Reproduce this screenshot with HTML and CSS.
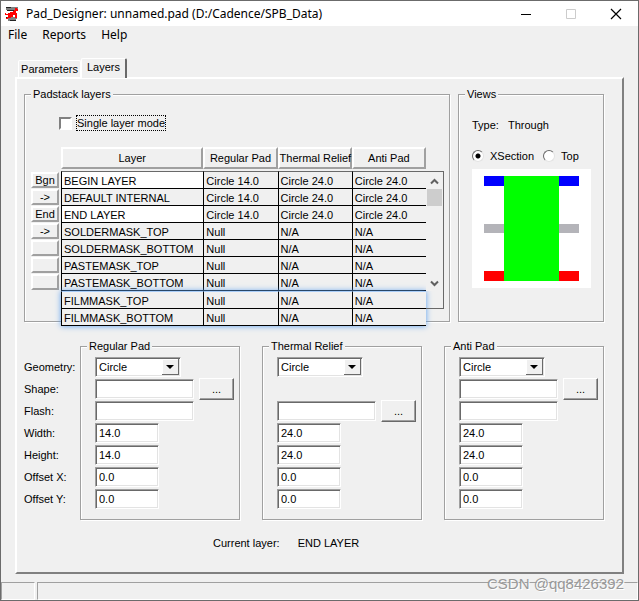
FILE: index.html
```html
<!DOCTYPE html>
<html lang="en">
<head>
  <meta charset="utf-8">
  <title>Pad_Designer: unnamed.pad</title>
  <link rel="stylesheet" href="styles.css">
</head>
<body>

<div class="window">
  <header class="titlebar">
    <svg class="app-icon" width="16" height="16" viewBox="0 0 16 16" shape-rendering="crispEdges">
      <path fill="#808080" d="M3 1h11v2H3zM2 2h9v2H2zM3 11h10v2H3zM4 13h8v2H4z"/>
      <path fill="#222" d="M2 1h5v1H2zM3 4h7v1H3zM2 11h2v1H2zM6 14h6v1H6z"/>
      <path fill="#f00" d="M11 2h2v1h1v2h-2v2h1v5h-2V9H9v2H7v1H4v1H2v-1h1v-1h1V9H1V7h1v1h2V7h2V6h3V5h1V4h1z"/>
    </svg>
    <span class="title">Pad_Designer: unnamed.pad (D:/Cadence/SPB_Data)</span>
    <button class="win-btn" aria-label="Minimize">
      <svg width="12" height="12" viewBox="0 0 12 12"><path d="M1 6.500h10" stroke="#000"/></svg>
    </button>
    <button class="win-btn" aria-label="Maximize" disabled>
      <svg width="12" height="12" viewBox="0 0 12 12"><path d="M1.500 1.500h9v9h-9z" fill="none" stroke="#ccc"/></svg>
    </button>
    <button class="win-btn" aria-label="Close">
      <svg width="12" height="12" viewBox="0 0 12 12"><path d="M1 1l10 10M11 1L1 11" stroke="#000" stroke-width="1.200"/></svg>
    </button>
  </header>

  <nav class="menubar">
    <button>File</button>
    <button>Reports</button>
    <button>Help</button>
  </nav>

  <div class="tabs" role="tablist">
    <button class="tab" role="tab">Parameters</button>
    <button class="tab active" role="tab" aria-selected="true">Layers</button>
  </div>

  <main class="panel">
    <div class="upper">
      <fieldset class="group">
        <legend>Padstack layers</legend>
        <div class="single-mode">
          <input type="checkbox" id="single">
          <label for="single">Single layer mode</label>
        </div>
        <div class="layer-list">
          <div class="row-buttons">
            <button>Bgn</button>
            <button>-&gt;</button>
            <button>End</button>
            <button>-&gt;</button>
            <button aria-label="Row 5"></button>
            <button aria-label="Row 6"></button>
            <button aria-label="Row 7"></button>
          </div>
          <table class="layers">
            <thead>
              <tr>
                <th class="name"><button>Layer</button></th>
                <th><button>Regular Pad</button></th>
                <th><button>Thermal Relief</button></th>
                <th><button>Anti Pad</button></th>
              </tr>
            </thead>
            <tbody>
              <tr><td class="editable">BEGIN LAYER</td><td>Circle 14.0</td><td>Circle 24.0</td><td>Circle 24.0</td></tr>
              <tr><td>DEFAULT INTERNAL</td><td>Circle 14.0</td><td>Circle 24.0</td><td>Circle 24.0</td></tr>
              <tr><td class="editable">END LAYER</td><td>Circle 14.0</td><td>Circle 24.0</td><td>Circle 24.0</td></tr>
              <tr><td>SOLDERMASK_TOP</td><td>Null</td><td>N/A</td><td>N/A</td></tr>
              <tr><td>SOLDERMASK_BOTTOM</td><td>Null</td><td>N/A</td><td>N/A</td></tr>
              <tr><td>PASTEMASK_TOP</td><td>Null</td><td>N/A</td><td>N/A</td></tr>
              <tr><td>PASTEMASK_BOTTOM</td><td>Null</td><td>N/A</td><td>N/A</td></tr>
            </tbody>
            <tbody class="extra">
              <tr><td>FILMMASK_TOP</td><td>Null</td><td>N/A</td><td>N/A</td></tr>
              <tr><td>FILMMASK_BOTTOM</td><td>Null</td><td>N/A</td><td>N/A</td></tr>
            </tbody>
          </table>
          <div class="scrollbar">
            <button aria-label="Scroll up">
              <svg width="9" height="7" viewBox="0 0 9 7"><path d="M1 5.500l3.500-3.500L8 5.500" fill="none" stroke="#606060" stroke-width="2"/></svg>
            </button>
            <div class="thumb"></div>
            <button aria-label="Scroll down">
              <svg width="9" height="7" viewBox="0 0 9 7"><path d="M1 1.500L4.500 5 8 1.500" fill="none" stroke="#606060" stroke-width="2"/></svg>
            </button>
          </div>
        </div>
      </fieldset>

      <fieldset class="group views">
        <legend>Views</legend>
        <div class="type"><span>Type:</span><span>Through</span></div>
        <div class="modes">
          <input type="radio" name="view" id="xsection" checked>
          <label for="xsection">XSection</label>
          <input type="radio" name="view" id="top">
          <label for="top">Top</label>
        </div>
        <svg class="preview" width="119" height="119" viewBox="0 0 119 119">
          <rect width="119" height="119" fill="#fff"/>
          <rect x="12" y="7" width="95" height="10" fill="#00f"/>
          <rect x="12" y="55" width="95" height="9" fill="#b4b4b9"/>
          <rect x="12" y="102" width="95" height="10" fill="#f00"/>
          <rect x="32" y="7" width="55" height="105" fill="#0f0"/>
        </svg>
      </fieldset>
    </div>

    <div class="lower">
      <div class="labels">
        <label for="reg-geometry">Geometry:</label>
        <label for="reg-shape">Shape:</label>
        <label for="reg-flash">Flash:</label>
        <label for="reg-width">Width:</label>
        <label for="reg-height">Height:</label>
        <label for="reg-x">Offset X:</label>
        <label for="reg-y">Offset Y:</label>
      </div>

      <fieldset class="group pad">
        <legend>Regular Pad</legend>
        <div class="field"><select id="reg-geometry"><option>Circle</option></select></div>
        <div class="field"><input type="text" id="reg-shape"><button class="browse">...</button></div>
        <div class="field"><input type="text" id="reg-flash"></div>
        <div class="field"><input type="text" class="short" id="reg-width" value="14.0"></div>
        <div class="field"><input type="text" class="short" id="reg-height" value="14.0"></div>
        <div class="field"><input type="text" class="short" id="reg-x" value="0.0"></div>
        <div class="field"><input type="text" class="short" id="reg-y" value="0.0"></div>
      </fieldset>

      <fieldset class="group pad">
        <legend>Thermal Relief</legend>
        <div class="field"><select aria-label="Geometry"><option>Circle</option></select></div>
        <div class="field"></div>
        <div class="field"><input type="text" aria-label="Flash"><button class="browse">...</button></div>
        <div class="field"><input type="text" class="short" aria-label="Width" value="24.0"></div>
        <div class="field"><input type="text" class="short" aria-label="Height" value="24.0"></div>
        <div class="field"><input type="text" class="short" aria-label="Offset X" value="0.0"></div>
        <div class="field"><input type="text" class="short" aria-label="Offset Y" value="0.0"></div>
      </fieldset>

      <fieldset class="group pad">
        <legend>Anti Pad</legend>
        <div class="field"><select aria-label="Geometry"><option>Circle</option></select></div>
        <div class="field"><input type="text" aria-label="Shape"><button class="browse">...</button></div>
        <div class="field"><input type="text" aria-label="Flash"></div>
        <div class="field"><input type="text" class="short" aria-label="Width" value="24.0"></div>
        <div class="field"><input type="text" class="short" aria-label="Height" value="24.0"></div>
        <div class="field"><input type="text" class="short" aria-label="Offset X" value="0.0"></div>
        <div class="field"><input type="text" class="short" aria-label="Offset Y" value="0.0"></div>
      </fieldset>
    </div>

    <div class="current"><span>Current layer:</span><span>END LAYER</span></div>
  </main>

  <footer class="statusbar">
    <div class="cell small"></div>
    <div class="cell"></div>
    <span class="watermark">CSDN @qq8426392</span>
  </footer>
</div>

</body>
</html>
```
FILE: styles.css
```css
* {
  box-sizing: border-box;
}

body {
  margin: 0;
  background-color: #f0f0f0;
  font-family: "Liberation Sans", Arial, sans-serif;
  font-size: 11px;
  line-height: 14px;
  color: #000;
}

button, input, select {
  margin: 0;
  padding: 0;
  font: inherit;
  color: inherit;
  border: none;
  border-radius: 0;
  background-color: #f0f0f0;
}

.window {
  display: flex;
  flex-direction: column;
  min-height: 100vh;
  border: 1px solid #6b6b6b;
}

/* title bar and menu */
.titlebar {
  display: flex;
  align-items: center;
  height: 25px;
  padding-left: 3px;
  background-color: #fff;
  font-family: "Noto Sans", "Open Sans", sans-serif;
  font-size: 12px;
}

.title {
  flex: 1;
  margin-left: 6px;
}

.win-btn {
  display: flex;
  align-items: center;
  justify-content: center;
  width: 45px;
  height: 25px;
  background-color: #fff;
}

.menubar {
  display: flex;
  gap: 15px;
  height: 18px;
  padding-left: 7px;
  font-family: "Noto Sans", "Open Sans", sans-serif;
  font-size: 12px;
}

/* tabs */
.tabs {
  display: flex;
  align-items: flex-end;
  margin: 14px 0 0 17px;
}

.tab {
  width: 63px;
  height: 17px;
  border: 1px solid #fff;
  border-bottom: none;
  border-radius: 2px 2px 0 0;
}

.tab.active {
  position: relative;
  width: 46px;
  height: 20px;
  padding-bottom: 3px;
  margin-bottom: -1px;
  border-right: 2px solid #696969;
}

.panel {
  flex: 1;
  margin: 0 14px 8px;
  padding: 8px 18px 0 7px;
  border: 2px solid;
  border-color: #fff #808080 #808080 #fff;
}

.group {
  min-width: 0;
  margin: 0;
  padding: 0;
  border: 1px solid #a0a0a0;
  box-shadow: 1px 1px 0 #fff, inset 1px 1px 0 #fff;
}

.group legend {
  margin-left: 6px;
  padding: 0 2px;
  background-color: #f0f0f0;
}

.upper {
  display: grid;
  grid-template-columns: 1fr 146px;
  gap: 8px;
}

.single-mode {
  display: flex;
  align-items: center;
  gap: 4px;
  height: 16px;
  margin: 14px 0 16px 34px;
}

.single-mode label {
  height: 16px;
  border: 1px dotted #000;
}

.single-mode input {
  appearance: none;
  width: 13px;
  height: 13px;
  background-color: #fff;
  border: 2px solid;
  border-color: #808080 #fff #fff #808080;
}

/* layer list */
.layer-list {
  display: flex;
  padding: 0 5px 0 6px;
  height: 162px;
}

.row-buttons {
  display: flex;
  flex: none;
  flex-direction: column;
  gap: 1px;
  width: 28px;
  margin: 25px 2px 0 0;
}

.row-buttons button,
.layers button {
  height: 16px;
  border: 2px solid;
  border-color: #fff #a0a0a0 #a0a0a0 #fff;
  line-height: 12px;
  white-space: nowrap;
}

.layers {
  flex: 1;
  width: 100%;
  height: max-content;
  table-layout: fixed;
  border-collapse: separate;
  border-spacing: 0;
}

.layers th {
  height: 24px;
  padding: 0;
  font-weight: normal;
  vertical-align: top;
}

.layers .name {
  width: 39%;
}

.layers th button {
  width: 100%;
  height: 22px;
}

.layers td {
  height: 17px;
  padding: 1px 0 0 2px;
  border-left: 1px solid #000;
  border-bottom: 1px solid #000;
  background-color: #f0f0f0;
  line-height: 14px;
}

.layers tbody tr:first-child td {
  height: 18px;
  border-top: 1px solid #696969;
}

.layers td.editable {
  background-color: #fff;
}

.layers .extra {
  box-shadow: 0 0 6px #5a9ff0;
}

.layers .extra tr:first-child td {
  border-top-color: #a9cdf8;
}

.scrollbar {
  display: flex;
  flex: none;
  flex-direction: column;
  width: 18px;
  margin-top: 24px;
  border: 1px solid #696969;
  border-left: none;
}

.scrollbar button {
  height: 17px;
}

.scrollbar .thumb {
  width: 15px;
  height: 17px;
  margin: 0 0 68px 1px;
  background-color: #cdcdcd;
}

/* views */
.views {
  padding: 0 13px 33px;
}

.views legend {
  margin-left: -7px;
}

.type {
  display: flex;
  gap: 9px;
  margin-top: 17px;
}

.modes {
  display: flex;
  align-items: center;
  height: 14px;
  margin: 17px 0 6px;
}

.modes input {
  appearance: none;
  flex: none;
  width: 12px;
  height: 12px;
  border: 1px solid;
  border-color: #696969 #e3e3e3 #e3e3e3 #696969;
  border-radius: 50%;
  background-color: #fff;
}

.modes input:checked {
  background-image: radial-gradient(circle, #000 2px, transparent 3px);
}

.modes label {
  margin: 0 9px 0 6px;
}

.preview {
  display: block;
}

/* pad parameters */
.lower {
  display: flex;
  gap: 22px;
  margin-top: 17px;
}

.labels {
  width: 56px;
  margin: 17px -22px 0 0;
}

.labels label {
  display: block;
  line-height: 22px;
}

.pad {
  flex: 1;
  padding: 3px 5px 9px 14px;
}

.pad legend {
  margin-left: -8px;
}

.field {
  display: flex;
  align-items: center;
  justify-content: space-between;
  height: 22px;
}

.field input,
.field select {
  height: 20px;
  padding: 0 2px;
  background-color: #fff;
  border: 1px solid;
  border-color: #a0a0a0 #fff #fff #a0a0a0;
  box-shadow: inset 1px 1px 0 #696969, inset -1px -1px 0 #e3e3e3;
}

.field input {
  width: 99px;
  padding-left: 3px;
}

.field .short {
  width: 64px;
}

.field select {
  appearance: none;
  width: 86px;
  padding-left: 3px;
  background-image: url("data:image/svg+xml,%3Csvg xmlns='http://www.w3.org/2000/svg' width='17' height='16'%3E%3Cpath d='M0 0h17v16H0z' fill='%23696969'/%3E%3Cpath d='M0 0h16v15H0z' fill='%23fff'/%3E%3Cpath d='M1 1h15v14H1z' fill='%23f0f0f0'/%3E%3Cpath d='M4 6h8l-4 4z'/%3E%3C/svg%3E");
  background-repeat: no-repeat;
  background-position: right 1px center;
}

.browse {
  width: 35px;
  height: 22px;
  border: 1px solid;
  border-color: #fff #696969 #696969 #fff;
  box-shadow: inset -1px -1px 0 #a0a0a0;
}

.current {
  display: flex;
  gap: 18px;
  margin: 16px 0 0 189px;
}

.statusbar {
  position: relative;
  display: flex;
  gap: 2px;
  height: 18px;
}

.cell {
  flex: 1;
  border: 1px solid;
  border-color: #a0a0a0 #fff #fff #a0a0a0;
}

.cell.small {
  flex: none;
  width: 34px;
}

.watermark {
  position: absolute;
  right: 14px;
  top: -7px;
  font-size: 15px;
  line-height: 18px;
  color: #999;
  text-shadow: 1px 1px 0 #fff;
}
```
